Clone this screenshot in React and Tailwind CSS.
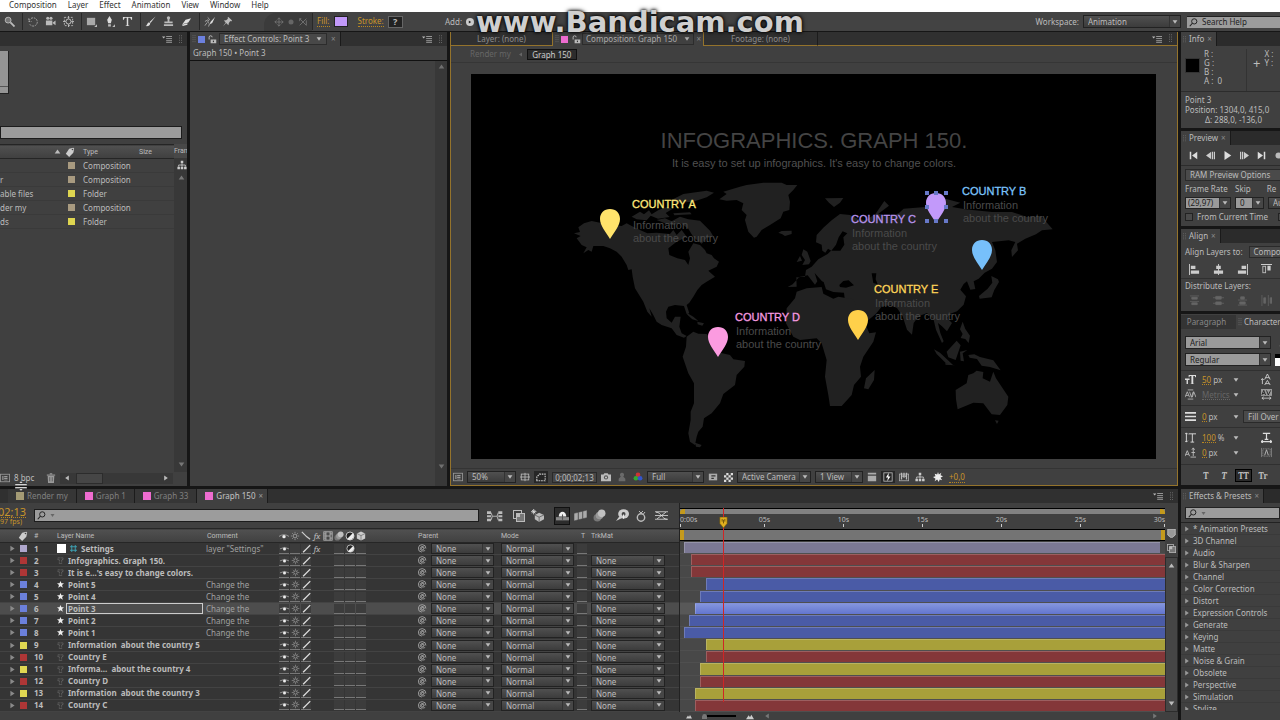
import React, { useState } from "react";

const icons = {
  zoom: <><circle cx="4.5" cy="4.5" r="3.2" fill="#777" stroke="#bbb" /><path d="M7 7l4.500 4.500" stroke="#bbb" strokeWidth="2" /></>,
  rotate: <path d="M2 2.500V6h3M2.500 5A4.500 4.500 0 1 1 3 9" fill="none" stroke="#aaa" strokeDasharray="2 1" />,
  camera: <><circle cx="3" cy="2.500" r="1.700" /><circle cx="6.500" cy="2.500" r="1.700" /><path d="M1 5h7v5H1zM8.500 7l3-2v5l-3-2z" /></>,
  anchor: <><rect x="1.500" y="1.500" width="9" height="9" fill="none" stroke="#bbb" strokeDasharray="2 1.500" /><circle cx="6" cy="6" r="2.800" fill="none" stroke="#ccc" /><path d="M0 6h3M9 6h3M6 0v3M6 9v3" stroke="#bbb" /></>,
  rect: <><rect x="1" y="2" width="9" height="8" fill="#aaa" /><path d="M12 9v3H9z" /></>,
  pen: <><path d="M6 0l2.500 4L7.500 8h-3l-1-4z" fill="#ddd" /><rect x="4.500" y="9" width="3" height="2.500" /><path d="M12 9v3H9z" /></>,
  type: <><path d="M1 1h10v3h-1L9 2H6.800v8l1.700 1h-5l1.700-1V2H3L2 4H1z" fill="#ddd" /></>,
  brush: <path d="M11.500.500L5 6.500l1 1zM4.500 7C2 7 3 10 .500 11c3 .500 5-.500 5.300-3z" fill="#ddd" />,
  stamp: <><circle cx="6" cy="2" r="1.800" /><path d="M5 3h2v3h3.500v2h-9V6H5zM1 9h10v2H1z" /></>,
  eraser: <path d="M5 4l6-1.500-3 4.500-6.500 2zM1 9.500l6-1.500v1.500L2 11z" fill="#e0e0e0" />,
  roto: <><path d="M4 1.500l2 2-2 3 2 2-1 3M4.500 4L1 6M3.500 7L1 10.500" stroke="#aaa" fill="none" /><path d="M12 1L7 6.500 6.500 9 9 7.500z" fill="#ddd" /></>,
  pin: <path d="M7 1l4 4-1 1-1-.500L7.500 7.500 7 10 4.500 7.500 1 11.500 4 7 2 5l2.500-.500L6.500 3 6 2z" fill="#bbb" />,
  axis: <path d="M6 1v10M1 6h10M4 3l2-2 2 2M4 9l2 2 2-2M3 4L1 6l2 2M9 4l2 2-2 2" stroke="#777" fill="none" />,
  dot: <circle cx="6" cy="6" r="3" fill="#666" />,
  axis2: <path d="M2 2l8 8M10 2L2 10M2 5V2h2M10 4v6" stroke="#777" fill="none" />,
  tag: <><path d="M5 2l5-1 1 1-1 5-5 5-4-4z" fill="#ccc" /><circle cx="9" cy="3" r="1" fill="#444" /></>,
  lock: <><path d="M1.500 6V3a2 2 0 0 1 4 0" fill="none" stroke="#bbb" strokeWidth="1.300" /><rect x="3.500" y="6" width="7.500" height="5" /><rect x="6.500" y="7.500" width="1.500" height="2" fill="#333" /></>,
  menu: <><path d="M0 3h4L2 5.500z" /><path d="M5 3h7M5 5.500h7M5 8h7M5 10h7" stroke="#aaa" /></>,
  tree: <><path d="M4.500 1h3v3h-3zM.500 8h3v3h-3zM4.500 8h3v3h-3zM8.500 8h3v3h-3z" fill="#ccc" /><path d="M6 4v4M2 8V6h8v2" stroke="#ccc" fill="none" /></>,
  trash: <><path d="M2 3.500h8L9.500 12h-7z" fill="#999" /><path d="M1 2.500h10M4.500 1h3" stroke="#bbb" /><path d="M4.500 5v5M7.500 5v5" stroke="#555" /></>,
  eye: <><path d="M0 6.500Q6 2.500 12 6.500" stroke="#aaa" fill="none" /><circle cx="6" cy="6.800" r="2" fill="#eee" /></>,
  sun: <><circle cx="6" cy="6" r="2.300" fill="none" stroke="#aaa" /><path d="M6 1v1.500M6 9.500V11M1 6h1.500M9.500 6H11M2.500 2.500l1 1M8.500 8.500l1 1M9.500 2.500l-1 1M2.500 9.500l1-1" stroke="#999" /></>,
  slash: <path d="M1.500 11L11 1.500" stroke="#e0e0e0" strokeWidth="1.700" />,
  backslash: <path d="M1 1l6 6 4 3" stroke="#ccc" strokeWidth="1.500" fill="none" />,
  film: <><rect x="1" y="1" width="10" height="10" fill="none" stroke="#bbb" /><path d="M3.500 1v10M8.500 1v10M3.500 6h5M1 3.500h2.500M1 6h2.500M1 8.500h2.500M8.500 3.500H11M8.500 8.500H11" stroke="#bbb" /></>,
  blur: <><circle cx="4" cy="8" r="3.500" fill="#777" /><circle cx="6" cy="6" r="3.500" fill="#999" /><circle cx="8" cy="4" r="3.500" fill="#c0c0c0" /></>,
  half: <><circle cx="6" cy="6" r="4.800" fill="#222" stroke="#ddd" /><path d="M9.500 2.500a5 5 0 0 1-7 7z" fill="#eee" /></>,
  cube: <><path d="M6 .500l5 2.500v6l-5 2.500L1 9V3z" fill="#ccc" /><path d="M1 3l5 2.500L11 3M6 5.500v6" stroke="#555" fill="none" strokeWidth=".700" /></>,
  spiral: <path d="M7.500 6a1.500 1.500 0 1 0-1.500 1.600C8 8 8.500 6 8 4.500 7 2.500 3.500 3 3 6c0 3.500 4 4 6.500 2.500M10.500 6A5 5 0 1 0 5 10.800" stroke="#bbb" fill="none" />,
  star: <path d="M6 0l1.700 4H12L8.600 6.800 10 11.500 6 8.800 2 11.500l1.400-4.700L0 4h4.300z" fill="#eee" />,
  text: <path d="M1.500 1.500h9v3H8v7H4v-7H1.500z" fill="none" stroke="#8c8c8c" strokeDasharray="1.500 1" />,
  grid: <path d="M3 0v12M9 0v12M0 3h12M0 9h12" stroke="#3fa9bd" strokeWidth="1.500" />,
  monitor: <><rect x=".500" y="1.500" width="11" height="9" fill="none" stroke="#999" /><path d="M3 3.500h1v5H3zM5 4h4v1H5zM5 6h4v1H5zM5 8h4v.800H5z" /></>,
  safe: <><rect x="1.500" y="2.500" width="9" height="7" fill="none" stroke="#bbb" /><path d="M6 1v10M0 6h12" stroke="#bbb" /></>,
  mask: <path d="M1 10.500V6l3-3.500h7v8z" fill="none" stroke="#ccc" strokeDasharray="2 1" strokeWidth="1.300" />,
  photo: <><path d="M0 3h3l1-1.500h4L9 3h3v8H0z" fill="#bbb" /><circle cx="6" cy="6.500" r="2.500" fill="#555" /><circle cx="6" cy="6.500" r="1.200" fill="#ccc" /></>,
  person: <path d="M6 1a2.500 2.500 0 0 1 1.500 4.500L10 8v3H2V8l2.500-2.500A2.500 2.500 0 0 1 6 1z" fill="#6a6a6a" />,
  rgb: <><circle cx="6" cy="3.500" r="2.800" fill="#c33" /><circle cx="3.500" cy="7.500" r="2.800" fill="#3a3" /><circle cx="8.500" cy="7.500" r="2.800" fill="#35c" /></>,
  region: <><rect x="1" y="2" width="10" height="8" fill="#aaa" /><path d="M4 4h5v1.500H4zM4 7h3v1.500H4z" fill="#333" /></>,
  checker: <><rect width="12" height="12" fill="#ddd" /><path d="M0 1.500h12M0 7.500h12" stroke="#444" strokeWidth="3" strokeDasharray="3 3" /><path d="M3 4.500h12M3 10.500h12" stroke="#444" strokeWidth="3" strokeDasharray="3 3" /></>,
  ratio: <><path d="M1 1h10v2H1zM1 4.500h10V11H1z" fill="#aaa" /></>,
  fast: <><rect x="1" y="1" width="10" height="10" fill="none" stroke="#bbb" /><path d="M7 1L3.500 6.500H6L5 11l4-5.500H6.500z" fill="#fff" /></>,
  timeline: <><rect x=".500" y="2.500" width="11" height="8" fill="none" stroke="#aaa" /><path d="M3 1v8M6 1v6M9 1v8M4 5h1.500M7 5h1.500" stroke="#bbb" strokeWidth="1.500" /></>,
  shutter: <path d="M6 0l1 3 3-2-1 3 3 1-3 2 2 3-3-1-1 3-2-3-3 2 1-3-3-2 3-1-1-3 3 1z" fill="#eee" />,
  flow: <><path d="M0 2.500h3v2H0zM0 5.500h3v1.500H0zM0 8h3v2H0zM8.500 2.500h3v2h-3zM8.500 5.500h3v1.500h-3zM8.500 8h3v2h-3z" fill="#bbb" /><path d="M3 3.500l1 2.700-1 2.800M8.500 3.500l-1 2.700 1 2.800M4 6.200h3.500" stroke="#aaa" fill="none" strokeWidth=".800" /></>,
  frames: <><rect x=".500" y=".500" width="8" height="8" fill="none" stroke="#bbb" /><rect x="3.500" y="3.500" width="8" height="8" fill="#777" stroke="#bbb" /><rect x="3" y="3" width="4" height="4" fill="#bbb" /></>,
  draft: <><path d="M2.500 0v5M0 2.500h5M1 1l3 3M4 1L1 4" stroke="#ddd" strokeWidth=".800" /><path d="M7.500 3.500L12 5.500v4L7.500 12 3.500 9.500v-4z" fill="#bbb" /><path d="M3.500 5.500l4 2 4.500-2M7.500 7.500V12" stroke="#555" fill="none" strokeWidth=".700" /></>,
  shy: <><path d="M0 7.500h12v3H0z" fill="#888" /><path d="M2.500 7a3.500 4.500 0 0 1 7 0z" fill="#eee" /><path d="M6 5v5" stroke="#555" /></>,
  blend: <><path d="M0 4l4-1v7l-4 1zM4 3l4-1v7l-4 1zM8 2l4-1v7L8 9z" fill="#aaa" stroke="#444" strokeWidth=".500" /></>,
  brain: <><ellipse cx="7" cy="4.500" rx="5" ry="4.300" fill="#ccc" /><path d="M3 7l-3 4 6-3z" fill="#ccc" /><circle cx="7" cy="4.500" r="1.800" fill="#444" /><path d="M7 5v4" stroke="#eee" /></>,
  timer: <><circle cx="6" cy="7.500" r="3.700" fill="none" stroke="#bbb" strokeWidth="1.400" /><path d="M4 1l2 2 2-2M10 2L8 4.500" stroke="#bbb" fill="none" /></>,
  graph: <><path d="M0 2.500h12M0 6h12M0 9.500h12" stroke="#bbb" /><path d="M1 3c5 0 5 6 10 6.500M2 9l8-6" stroke="#ddd" fill="none" strokeWidth=".800" /></>,
  solo: <><circle cx="6" cy="6" r="4" /></>,
  toStart: <path d="M1 1h2v10H1zM11 1v10L4 6z" fill="#ddd" />,
  stepBack: <path d="M7 1v10L0 6zM8 1h1.500v10H8zM10.500 1H12v10h-1.500z" fill="#ccc" />,
  play: <path d="M2 0v12l9-6z" fill="#ddd" />,
  stepFwd: <path d="M5 1v10l7-5zM2.500 1H4v10H2.500zM0 1h1.500v10H0z" fill="#ccc" />,
  toEnd: <path d="M9 1h2v10H9zM1 1v10l7-5z" fill="#ddd" />,
  alignL: <path d="M0 0h1v12H0zM2 2h5v3.500H2zM2 7h9v3.500H2z" fill="#ccc" />,
  alignC: <path d="M5.500 0h1v12h-1zM3.500 2h5v3.500h-5zM1 7h10v3.500H1z" fill="#ccc" />,
  alignR: <path d="M11 0h1v12h-1zM5 2h5v3.500H5zM1 7h9v3.500H1z" fill="#ccc" />,
  alignT: <><path d="M0 0h12v1H0zM7 2h3.500v5H7z" fill="#ccc" /><rect x="2" y="2.500" width="3" height="7" fill="none" stroke="#bbb" /></>,
  distT: <path d="M1 1h10M1 7h10M3 2.500h6v2H3zM3 8.500h6v2H3z" stroke="#666" strokeWidth=".800" fill="#666" />,
  distM: <path d="M0 3h12M0 9h12M3 1.500h6v3H3zM3 7.500h6v3H3z" stroke="#666" strokeWidth=".800" fill="#666" />,
  distB: <path d="M1 5.500h10M1 11h10M4 2h4v2.500H4zM3 7.500h6V10H3z" stroke="#666" strokeWidth=".800" fill="#666" />,
  distV: <path d="M1 0v12M8 0v12M3 3h2v6H3zM10 3h2v6h-2z" stroke="#666" fill="#666" strokeWidth=".800" />,
  size: <path d="M0 5h5v1.500H3.200V11H1.700V6.500H0zM4 1h8v2.500h-.800L10.800 2.200H9V10.500h1V11H6v-.500h1V2.200H5.200L4.800 3.500H4z" fill="#ddd" />,
  kern: <path d="M0 9l2.500-6L5 9M1 7h3M5 3l2 6 2-6M8 9l1.500-6L12 9M3 1h6M3 11h6" stroke="#bbb" fill="none" strokeWidth=".900" />,
  tracking: <><rect width="12" height="7.500" fill="#999" /><path d="M1 6.500L3 1.500l2 5M2 5h2M6 1.500l2 5 2.500-5" stroke="#222" fill="none" /><path d="M1 10h10M3 8.500L1 10l2 1.500M9 8.500l2 1.500-2 1.500" stroke="#ccc" fill="none" strokeWidth=".900" /></>,
  leading: <path d="M4 6l3-6 3 6M5 4h4M4 12l3-5 3 5M5 10.500h4M1.500 5v6M0 6.500L1.500 5 3 6.500" stroke="#ccc" fill="none" />,
  lines: <path d="M0 2h12M0 6h12M0 10h12" stroke="#ddd" strokeWidth="1.800" />,
  vscale: <path d="M1.500 1v10M0 2.500L1.500 1 3 2.500M0 9.500L1.500 11 3 9.500M4 2h8M8 2v9M6 11h4" stroke="#ddd" fill="none" />,
  hscale: <path d="M2 1.500h8M6 1v7M4 8h4M0 10.500h12M2 9l-2 1.500L2 12M10 9l2 1.500-2 1.500" stroke="#ddd" fill="none" strokeWidth="1.300" />,
  baseline: <path d="M0 10l2.500-6L5 10M1 8h3M6 11h6M9 1v9M7.500 3L9 1l1.500 2M7 6h4" stroke="#bbb" fill="none" />,
  tsume: <><rect x="2" y="2" width="8" height="8" fill="none" stroke="#999" strokeDasharray="1 1" /><path d="M4 9l2-6 2 6M0 1v10M12 1v10" stroke="#bbb" fill="none" /></>,
  search: <><circle cx="7" cy="4.500" r="3.500" fill="none" stroke="#222" strokeWidth="1.300" /><path d="M4.500 7L1 11" stroke="#222" strokeWidth="1.500" /></>,
  shield: <path d="M1 0h10v8l-5 4-5-4z" fill="#999" stroke="#ccc" />,
  grip: <path d="M4 1h1M7 1h1M4 4h1M7 4h1M4 7h1M7 7h1M4 10h1M7 10h1" stroke="#777" strokeWidth="1.500" />,
  mountain: <path d="M0 11l4-6 2 3 2-4 4 7z" fill="#ccc" />,
};

const Icon = ({ name, className = "size-[10px]" }) => (
  <svg viewBox="0 0 12 12" fill="#bbb" className={`shrink-0 ${className}`} aria-hidden="true">
    {icons[name]}
  </svg>
);

const Arrow = ({ dir = "down", className = "size-[6px]" }) => {
  const paths = { down: "M1 2h8L5 8z", up: "M1 8h8L5 2z", right: "M2 1v8l6-4z", left: "M8 1v8L2 5z" };
  return (
    <svg viewBox="0 0 10 10" fill="currentColor" className={`shrink-0 ${className}`} aria-hidden="true">
      <path d={paths[dir]} />
    </svg>
  );
};

const Select = ({ value, label, className = "", light = false }) => (
  <div className={`relative shrink-0 border border-[#222] bg-linear-to-b from-[#505050] to-[#3c3c3c] ${className}`}>
    <select
      aria-label={label}
      className={`block h-full w-full appearance-none truncate pr-3 pl-1 outline-none ${light ? "bg-[#9a9a9a] text-[#1c1c1c]" : ""}`}
    >
      <option>{value}</option>
    </select>
    <span className="pointer-events-none absolute inset-y-0 right-0 flex w-[11px] items-center justify-center border-l border-[#333] bg-[#464646]">
      <Arrow />
    </span>
  </div>
);

const PanelMenu = () => (
  <div className="ml-auto flex items-center gap-1 pr-0.5">
    <Icon name="menu" />
    <Icon name="grip" className="size-[9px]" />
  </div>
);

const PanelTab = ({ title }) => (
  <div className="flex h-[14px] bg-[#2b2b2b]">
    <div className="flex items-center gap-px border-r border-[#1a1a1a] bg-[#404040] pr-1">
      <Icon name="grip" className="size-[7px]" />
      <h2>{title}</h2>
      <button aria-label="Close" className="pl-0.5 text-[#888]">×</button>
    </div>
  </div>
);

const Sep = () => <span className="h-[17px] w-px bg-[#282828]" />;

const ToolGroup = ({ names }) => (
  <div className="flex">
    {names.map((name) => (
      <button key={name} aria-label={name} className="flex w-[18px] justify-center">
        <Icon name={name} className="size-[11px]" />
      </button>
    ))}
  </div>
);

const Toolbar = () => (
  <div className="flex h-[19px] shrink-0 items-center bg-[#434343]">
    <ToolGroup names={["zoom"]} />
    <div className="ml-1 flex items-center"><Sep /><ToolGroup names={["rotate", "camera", "anchor"]} /></div>
    <div className="ml-1 flex items-center"><Sep /><ToolGroup names={["rect", "pen", "type"]} /></div>
    <div className="ml-1 flex items-center"><Sep /><ToolGroup names={["brush", "stamp", "eraser"]} /></div>
    <div className="ml-1 flex items-center"><Sep /><ToolGroup names={["roto", "pin"]} /></div>
    <div className="ml-7 flex items-center gap-0.5 rounded-tl-xl bg-[#3b3b3b] py-1 pr-1 pl-[10px]">
      <Icon name="axis" />
      <Icon name="dot" />
      <Icon name="axis2" />
    </div>
    <Sep />
    <div className="flex w-[132px] items-center pl-1">
      <span className="border-b border-dotted border-[#b8861f] leading-[10px] text-[#c8952a]">Fill:</span>
      <button aria-label="Fill colour" className="ml-1 h-[11px] w-[14px] border border-[#222] bg-[#c299fa]" />
      <span className="ml-2.5 border-b border-dotted border-[#b8861f] leading-[10px] text-[#c8952a]">Stroke:</span>
      <button className="ml-1 h-3 w-[15px] border border-[#666] bg-[#222] text-[9px] leading-[10px] font-bold">?</button>
    </div>
    <span>Add:</span>
    <button aria-label="Add" className="ml-1 flex size-2 items-center justify-center rounded-full bg-[#ccc] text-[#222]">
      <Arrow dir="right" className="size-1" />
    </button>
    <div className="ml-auto flex items-center">
      <span>Workspace:</span>
      <Select label="Workspace" value="Animation" className="ml-1 h-[13px] w-[98px]" />
      <label className="ml-1.5 flex h-3 w-[93px] items-center gap-1 border-t border-[#222] bg-[#9c9c9c] pl-0.5 text-[#222]">
        <Icon name="search" className="size-[9px]" />
        <input aria-label="Search Help" defaultValue="Search Help" className="w-full min-w-0 outline-none" />
      </label>
    </div>
  </div>
);

const files = [
  { name: "", color: "#a89a80", type: "Composition" },
  { name: "r", color: "#a89a80", type: "Composition" },
  { name: "able files", color: "#ded550", type: "Folder" },
  { name: "der my", color: "#a89a80", type: "Composition" },
  { name: "ds", color: "#ded550", type: "Folder" },
];

const ProjectPanel = () => (
  <section className="flex w-[187px] shrink-0 flex-col overflow-hidden bg-[#404040]">
    <div className="flex h-[14px] shrink-0 bg-[#303030]"><PanelMenu /></div>
    <div className="mt-[5px] h-[43px] w-[9px] shrink-0 border-r border-b border-[#222] bg-[#959595]">
      <div className="mt-[35px] h-px bg-[#555]" />
    </div>
    <input aria-label="Search project" className="mt-8 h-[13px] w-[182px] shrink-0 border border-[#1c1c1c] bg-[#9c9c9c]" />
    <div className="mt-[5px] flex min-h-0 flex-1">
      <table className="w-[174px] shrink-0 table-fixed self-start">
        <colgroup><col className="w-[65px]" /><col className="w-[14px]" /><col className="w-[56px]" /><col className="w-[39px]" /></colgroup>
        <thead>
          <tr className="h-[14px] border-y border-[#252525] bg-linear-to-b from-[#505050] to-[#404040] text-left font-['Roboto'] text-[7px]">
            <th className="p-0"><Arrow dir="up" className="mr-1 ml-auto size-[7px]" /></th>
            <th className="p-0"><Icon name="tag" /></th>
            <th className="p-0 pl-1 font-normal">Type</th>
            <th className="p-0 pl-1 font-normal">Size</th>
          </tr>
        </thead>
        <tbody>
          {files.map((file, i) => (
            <tr key={i} className="h-[14px] border-b border-[#3a3a3a]">
              <td className="truncate p-0">{file.name}</td>
              <td className="p-0"><span className="ml-[3px] block size-[7px]" style={{ background: file.color }} /></td>
              <td className="p-0 pl-1">{file.type}</td>
              <td className="p-0" />
            </tr>
          ))}
        </tbody>
      </table>
      <div className="flex flex-1 flex-col items-center bg-[#383838]">
        <span className="h-[14px] w-full overflow-hidden bg-[#484848] font-['Roboto'] text-[7px] leading-[14px]">Fram</span>
        <Icon name="tree" className="mt-0.5 size-[10px]" />
        <Arrow dir="up" className="mt-1 size-[7px] text-[#777]" />
        <Arrow dir="down" className="mt-auto mb-1 size-[7px] text-[#777]" />
      </div>
    </div>
    <div className="mb-0.5 flex h-3 shrink-0 items-center">
      <Icon name="monitor" />
      <span className="ml-1">8 bpc</span>
      <Icon name="trash" className="ml-3 size-[10px]" />
      <div className="ml-1 flex h-[11px] w-[113px] items-center bg-[#383838] px-1">
        <Arrow dir="left" />
        <span className="ml-1.5 h-[11px] w-[27px] border border-[#2c2c2c] bg-[#464646]" />
        <Arrow dir="right" className="ml-auto size-[6px]" />
      </div>
    </div>
  </section>
);

const EffectControls = () => (
  <section className="flex w-[257px] shrink-0 flex-col bg-[#404040]">
    <div className="flex h-[14px] shrink-0 bg-[#303030]">
      <div className="flex items-center border-r border-[#1a1a1a] bg-[#404040]">
        <Icon name="grip" className="size-2" />
        <span className="size-[7px] bg-[#6c80de]" />
        <Icon name="lock" className="ml-[3px] size-[9px]" />
        <button className="ml-0.5 flex h-3 w-[108px] items-center border border-[#2c2c2c] bg-[#484848] px-1 whitespace-nowrap">
          Effect Controls: Point 3
          <Arrow className="ml-auto size-[6px]" />
        </button>
        <button aria-label="Close" className="px-1 text-[#888]">×</button>
      </div>
      <PanelMenu />
    </div>
    <p className="h-[15px] border-b border-[#111] pl-[3px] leading-[14px]">Graph 150 • Point 3</p>
    <div className="ml-auto flex w-3 flex-1 flex-col items-center justify-between bg-[#383838] pt-0.5 pb-4 text-[#707070]">
      <Arrow dir="up" className="size-[7px]" />
      <Arrow className="size-[7px]" />
    </div>
  </section>
);

const Pin = ({ x, y, color }) => (
  <path d="M0-17C6-17 10-13 10-7 10 0 4 6 0 13-4 6-10 0-10-7-10-13-6-17 0-17z" fill={color} transform={`translate(${x} ${y})`} />
);

const countries = [
  { name: "COUNTRY A", x: 161, y: 134, color: "#ffe87a", gap: 21 },
  { name: "COUNTRY B", x: 491, y: 121, color: "#7cc4fb", gap: 14 },
  { name: "COUNTRY C", x: 380, y: 149, color: "#b794ec", gap: 14 },
  { name: "COUNTRY D", x: 264, y: 247, color: "#f79be0", gap: 14 },
  { name: "COUNTRY E", x: 403, y: 219, color: "#ffd558", gap: 14 },
];

const WorldMap = () => (
  <svg viewBox="0 0 685 385" className="block h-auto w-full bg-black font-['Liberation_Sans']" role="img" aria-label="World map infographic">
    <g fill="#212121" transform="translate(89 96) scale(.3333)">
      <path d="M42 190l18-4-5-14 17-12 23-7 25 5 30 7 35 3 15-8 15 8 25 12 22 10 28-2 40 4 10-12 10 15 15-15 15 20-30 15-25 20 3 20 24 10 23 5 10 15 5-20-5-20 15-25 20 5 15 15 5 10 15 5 7 10 15 10-7 15-25 12 20 18-25 15-15 10-13 15-12 20-12 18-8 7 8 25-8 2-8-24-27-3-20 5-7 15 2 20 15 13 10-18h17l-4 30 7 20 15 8-8 5-22-8-15-20-30-10-15-10-10-20-12-20 7 25-13-15-12-30-25-40-7-35-3-22-10 2-5-15-15-25-15-15-20-10-20-7h-30l-5 17-10-5-15 10 10-18-15-7-15-20 12-7z" />
      <path d="M380 500l20-15 15 6 25 1 30 38 10 18 30 7 10 13 35 5-2 17-23 25-5 30-35 27-10 28-25 30-23 15-4 25-13 15-5 15-5 25-15-10-5-25 7-40v-25l10-25v-60l-17-30-17-50 10-30zM405 818l20 7-5 7-12-2zM380 428l20 12 15 13-18-5-15-14zM412 455l20 5-5 7-14-4z" />
      <path d="M330 92l40-20 70-10 22 6-22 14-40 13-50 3zM215 140l25-15 12 8 15-12 8 12 22-14 25-8 15 6-20 12 12 12-35 5-22-9-12 14-30-3zM340 130l50-3 5 6-52 3zM290 150l25-5 20 9 25-14 25 8 35 4 30 30 10 17-20 5-15 17-25-20-15-25-25-18-20 8-25-6z" />
      <path d="M478 88l22-16-10-7 50-15 20-5 50-7h55l15 7h32l-12 15-15 15 5 20-2 25-18 5-8 20-32 20-25 15-15 20-8 3-17-18-10-35 5-15-15-15 5-20-20-10-30 2zM655 188l10-5 30-1v10l-20 6-8-5z" />
    </g>
    <g fill="#212121" transform="translate(309 96) scale(.3333)">
      <path d="M50 350l-1-28 26-2 3-20 17-10 20-22 28-16 10-10h28l12-18-3-22 12-12-14-6-12 18-8 22-14 18-10-6-8 12-9-6-2-18-17-7 2-22 20-22 25-22 25-19 30 3 25 12 22 4 30-20 26-38 14 14-32 24 33 9 28-10 15-14 65-5 30-10 30-15 45 12-25 13 40 7 80 8h60l45 15h45l32 37-32 3-18 12-32 13-25 15 3 20-18 20-2-20 12-25-20-5-50 5 10 25 5 35-15 20-22 12-18 18-15 8 5 23-15 2-10-25-10 8-10 17 17 20-7 25-20 20-20 7-10 13 15 15-15 25-15-15-12-10 7 30 10 25-5 5-18-40-7-30-20-20-25 10-15 20-5 35-15-15-13-40-17-25-20-8-25 3-18 22-38 32-18 6-17-38-20-38-3-25-32-2-22-8-7-22-5-2-22-25 8 25-7 10-22-28-25 5-20 22-15 8z" />
      <path d="M50 365l30-10 45-4 5 20 30 15 15-6 45 8 15 32 20 40 13 30 20-3-8 28-30 45-10 30 3 30-21 25-7 30-30 33h-35l-5-33-10-55 5-50-15-50-15-15-50 5-20-10-22-40 2-45 25-30zM284 600l-2 30-17 28-13-3 6-30zM135 85l55-1-10 14-18 13-15-13zM70 238l12 7 10 28-5 10-20 2 8-15-10-15zM60 258l6 14-16 4z" />
      <path d="M462 538l18 10 40 38-22-6-28-28zM500 545l30-33 12 14-15 44-22-8zM495 580l30 6-28-2zM540 545l22-5-14 10 4 24-10-2zM548 455l8 22 14 20-4 22-10-12-14-3 6-12-8-14zM565 555l18-2 17 8 40 10 22 30-32-10-25-4-14-20-22-4zM634 318l20 10 3 8-14 24-8 22-36 4-2-8 26-22 14-18z" />
      <path d="M527 660l33-20 5-25 15-5 10-8 20 4-2 19 22 10 10-30 8 20 37 55-3 25-22 30-25-2-25-33-30-2-47 20-5-30zM645 751l11 1-5 10z" />
      <path d="M275 310h14l-2 18 6 15-13-4zM178 345l12-12 16-2 16 15-24 7-18-2z" fill="#000" />
    </g>
    <text x="343" y="74" textAnchor="middle" fontSize="22" fill="#444">INFOGRAPHICS. GRAPH 150.</text>
    <text x="343" y="93" textAnchor="middle" fontSize="11" fill="#505050">It is easy to set up infographics. It's easy to change colors.</text>
    {countries.map((c) => (
      <g key={c.name}>
        <text x={c.x} y={c.y} fontSize="11" stroke={c.color} strokeWidth=".3" fill={c.color}>{c.name}</text>
        <text x={c.x + 1} y={c.y + c.gap} fontSize="11" fill="#4a4a4a">Information</text>
        <text x={c.x + 1} y={c.y + c.gap + 13} fontSize="11" fill="#4a4a4a">about the country</text>
      </g>
    ))}
    <Pin x={139} y={152} color="#ffe36b" />
    <Pin x={465} y={136} color="#c299fa" />
    <Pin x={511} y={183} color="#77c0fb" />
    <Pin x={247} y={270} color="#fb9be0" />
    <Pin x={387} y={253} color="#ffd04a" />
    {[119, 133, 147].map((y) => [456, 465, 475].map((x) => (x === 465 && y === 133 ? null : <rect key={`${x}-${y}`} x={x - 2} y={y - 2} width="4" height="4" fill="#6778c8" />)))}
  </svg>
);

const CompositionPanel = () => (
  <section className="flex min-w-0 flex-1 flex-col border border-t-0 border-[#94732c] bg-[#404040]">
    <div className="flex h-[14px] shrink-0 bg-[#303030] whitespace-nowrap text-[#8c8c8c]">
      <button className="w-[101px] border-b border-[#94732c]">Layer: (none)</button>
      <div className="flex w-[152px] items-center border-x border-[#94732c] bg-[#404040] text-[#aaa]">
        <Icon name="grip" className="size-2" />
        <span className="size-[7px] bg-[#ee6cd0]" />
        <Icon name="lock" className="ml-1 size-[9px]" />
        <button className="ml-px flex h-3 flex-1 items-center border border-[#2c2c2c] px-[3px]">
          Composition: Graph 150
          <Arrow className="ml-auto size-[6px]" />
        </button>
        <button aria-label="Close" className="px-0.5 text-[#888]">×</button>
      </div>
      <button className="w-[114px] border-r border-b border-b-[#94732c] border-r-[#1c1c1c]">Footage: (none)</button>
      <div className="flex flex-1 border-b border-[#94732c]"><PanelMenu /></div>
    </div>
    <nav className="flex h-[17px] shrink-0 items-center border-b border-[#363636] pl-[19px] text-[#666]">
      <button>Render my</button>
      <Arrow dir="left" className="ml-[7px] size-[5px]" />
      <button className="ml-1 h-[11px] w-[50px] border border-[#111] bg-[#2c2c2c] leading-[9px] text-[#ccc]">Graph 150</button>
    </nav>
    <div className="flex-1 pt-[11px] pr-[21px] pl-5"><WorldMap /></div>
    <div className="flex h-[17px] shrink-0 items-center gap-1 border-t border-[#343434] pl-0.5">
      <Icon name="monitor" />
      <Select label="Zoom" value="50%" className="h-3 w-[49px]" />
      <Icon name="safe" />
      <span className="flex h-3 w-[14px] items-center justify-center bg-[#262626]"><Icon name="mask" /></span>
      <button className="h-[11px] w-[45px] border border-[#2a2a2a] bg-[#464646] leading-[9px]">0;00;02;13</button>
      <Icon name="photo" />
      <Icon name="person" className="ml-0.5 size-[10px]" />
      <Icon name="rgb" className="ml-0.5 size-[10px]" />
      <Select label="Resolution" value="Full" className="h-3 w-[57px]" />
      <Icon name="region" />
      <Icon name="checker" className="ml-0.5 size-[9px]" />
      <Select label="Camera" value="Active Camera" className="h-3 w-[74px]" />
      <Select label="View layout" value="1 View" className="h-3 w-[48px]" />
      <Icon name="ratio" className="size-[10px]" />
      <span className="flex h-3 w-[14px] items-center justify-center bg-[#262626]"><Icon name="fast" /></span>
      <Icon name="timeline" />
      <Icon name="tree" className="ml-0.5 size-[10px]" />
      <Icon name="shutter" className="ml-1 size-[10px]" />
      <span className="ml-0.5 border-b border-dotted border-[#b8861f] leading-[10px] text-[#c8952a]">+0,0</span>
    </div>
  </section>
);

const swatches = { lavender: "#aea6cc", red: "#ae3636", blue: "#6b80dc", yellow: "#e0d752" };
const bars = { lavender: "#7b7894", red: "#843739", blue: "#4a5ba6", yellow: "#a8a03a" };

// start is the in point, in pixels of the 485px wide track
const layers = [
  { name: "Settings", color: "lavender", kind: "null", comment: 'layer "Settings"', start: 4, end: 480 },
  { name: "Infographics. Graph 150.", color: "red", kind: "text", start: 11 },
  { name: "It is e...'s easy to change colors.", color: "red", kind: "text", start: 11 },
  { name: "Point 5", color: "blue", kind: "shape", comment: "Change the", start: 26 },
  { name: "Point 4", color: "blue", kind: "shape", comment: "Change the", start: 20 },
  { name: "Point 3", color: "blue", kind: "shape", comment: "Change the", start: 15, selected: true },
  { name: "Point 2", color: "blue", kind: "shape", comment: "Change the", start: 9 },
  { name: "Point 1", color: "blue", kind: "shape", comment: "Change the", start: 4 },
  { name: "Information  about the country 5", color: "yellow", kind: "text", start: 26 },
  { name: "Country E", color: "red", kind: "text", start: 26 },
  { name: "Informa...  about the country 4", color: "yellow", kind: "text", start: 20 },
  { name: "Country D", color: "red", kind: "text", start: 20 },
  { name: "Information  about the country 3", color: "yellow", kind: "text", start: 15 },
  { name: "Country C", color: "red", kind: "text", start: 15 },
];

const Slot = ({ icon }) => (
  <span className="flex h-[10px] w-[10px] items-center justify-center border-b border-[#777] bg-[#3c3c3c]">
    {icon && <Icon name={icon} className="size-[9px]" />}
  </span>
);

const LayerRow = ({ layer, index }) => (
  <tr className={`h-3 border-b border-[#434343] ${layer.selected ? "bg-[#4d4d4d]" : "bg-[#353535]"}`}>
    <td className="p-0"><Arrow dir="right" className="ml-auto size-[7px] text-[#8a8a8a]" /></td>
    <td className="p-0"><span className="ml-1 block size-[7px]" style={{ background: swatches[layer.color] }} /></td>
    <td className="p-0 pl-1 font-bold">{index + 1}</td>
    <td className="p-0">
      <div className="flex items-center gap-1 pl-1">
        {layer.kind === "null" && <span className="size-[9px] bg-white" />}
        {layer.kind === "null" && <Icon name="grid" className="size-[7px]" />}
        {layer.kind === "text" && <Icon name="text" className="size-[7px]" />}
        {layer.kind === "shape" && <Icon name="star" className="size-[7px]" />}
        <span className={`flex-1 truncate font-bold whitespace-pre ${layer.selected ? "-ml-0.5 border border-[#ccc] pl-px leading-[9px]" : ""}`}>{layer.name}</span>
      </div>
    </td>
    <td className="p-0 pl-[3px] whitespace-nowrap text-[#a0a0a0]">{layer.comment}</td>
    <td className="p-0">
      <div className="flex gap-px pl-[3px]">
        <Slot icon="eye" />
        <Slot icon={index > 0 ? "sun" : null} />
        <Slot icon="slash" />
        <span className="w-[10px] text-center font-serif text-[9px] leading-[10px] italic">{index === 0 ? "fx" : ""}</span>
        <span className="w-[10px]" />
        <Slot />
        <Slot icon={index === 0 ? "half" : null} />
        <Slot />
      </div>
    </td>
    <td className="p-0">
      <div className="flex items-center gap-1">
        <Icon name="spiral" className="size-[9px]" />
        <Select label={`Parent of ${layer.name}`} value="None" className="h-[11px] w-[63px]" />
      </div>
    </td>
    <td className="p-0"><Select label={`Mode of ${layer.name}`} value="Normal" className="h-[11px] w-[73px]" /></td>
    <td className="p-0"><Slot /></td>
    <td className="p-0">{index > 0 && <Select label={`Track matte of ${layer.name}`} value="None" className="h-[11px] w-[74px]" />}</td>
    <td className="p-0" />
  </tr>
);

const LayerTable = () => (
  <table className="h-[184px] w-full table-fixed">
    <colgroup>
      <col className="w-[16px]" /><col className="w-[14px]" /><col className="w-[23px]" /><col className="w-[150px]" />
      <col className="w-[73px]" /><col className="w-[142px]" /><col className="w-[83px]" /><col className="w-[76px]" />
      <col className="w-[14px]" /><col className="w-[78px]" /><col />
    </colgroup>
    <thead>
      <tr className="h-[14px] border-y border-[#262626] bg-linear-to-b from-[#505050] to-[#414141] text-left font-['Roboto'] text-[7px] *:p-0 *:font-normal">
        <th />
        <th><Icon name="tag" className="ml-0.5 size-[10px]" /></th>
        <th><span className="pl-1">#</span></th>
        <th><span className="pl-1">Layer Name</span></th>
        <th><span className="pl-1">Comment</span></th>
        <th>
          <div className="flex items-center gap-px pl-[3px]">
            <Icon name="eye" /><Icon name="sun" /><Icon name="backslash" />
            <span className="w-[10px] text-center font-serif text-[9px] leading-[10px] italic">fx</span>
            <Icon name="film" /><Icon name="blur" /><Icon name="half" /><Icon name="cube" />
          </div>
        </th>
        <th>Parent</th>
        <th>Mode</th>
        <th><span className="pl-1">T</span></th>
        <th>TrkMat</th>
        <th />
      </tr>
    </thead>
    <tbody>
      {layers.map((layer, i) => <LayerRow key={i} layer={layer} index={i} />)}
    </tbody>
  </table>
);

const Tracks = () => (
  <div className="relative flex w-[485px] shrink-0 flex-col">
    <div className="mt-[5px] flex h-[6px] shrink-0 justify-between border-t border-black bg-[#828282]">
      <span className="w-[5px] rounded-tl bg-[#c49a1c]" />
      <span className="w-[5px] rounded-tr bg-[#c49a1c]" />
    </div>
    <div className="flex h-[14px] shrink-0 justify-between pt-px text-[7px] leading-[9px]">
      {["0:00s", "05s", "10s", "15s", "20s", "25s", "30s"].map((t, i) => (
        <span key={t} className={`flex w-[11px] flex-col ${i === 0 ? "items-start" : i === 6 ? "items-end" : "items-center"}`}>
          <span>{t}</span>
          <span className="h-[3px] w-px bg-[#ccc]" />
        </span>
      ))}
    </div>
    <div className="mt-px flex h-3 shrink-0 justify-between border-y border-black bg-[#747474]">
      <span className="w-1 bg-[#c49a1c]" />
      <span className="w-1 bg-[#c49a1c]" />
    </div>
    <div className="mt-px flex h-[170px] flex-col bg-[#484848]">
      {layers.map((layer, i) => (
        <div key={i} className={`flex flex-1 border-b border-[#4f4f4f] ${layer.selected ? "bg-[#585858]" : ""}`}>
          <div
            className={`border-t border-l border-white/20 ${layer.selected ? "bg-linear-to-b from-[#8394dd] to-[#6375cf]" : ""}`}
            style={{
              marginLeft: layer.start,
              width: (layer.end || 485) - layer.start,
              backgroundColor: layer.selected ? undefined : bars[layer.color],
            }}
          />
        </div>
      ))}
    </div>
    <div className="absolute top-[5px] bottom-[10px] left-[43px] w-px bg-[#d02525]" />
    <svg viewBox="0 0 10 12" className="absolute top-[14px] left-[39px] h-[11px] w-[9px]" aria-hidden="true">
      <path d="M1 0h8v7l-4 5-4-5z" fill="#e0b020" stroke="#7a5c08" strokeWidth=".7" />
      <path d="M3.500 2v3M6.500 2v3M5 3v4" stroke="#6b5008" />
    </svg>
  </div>
);

const TimelinePanel = () => {
  const [tab, setTab] = useState("Graph 150");
  const tabs = [
    { name: "Render my", color: "#a39a74" },
    { name: "Graph 1", color: "#ee6cd0" },
    { name: "Graph 33", color: "#ee6cd0" },
    { name: "Graph 150", color: "#ee6cd0" },
  ];

  return (
    <section className="flex h-[231px] shrink-0 flex-col overflow-hidden bg-[#404040]">
      <div className="flex h-[14px] shrink-0 bg-[#303030] pl-2">
        {tabs.map((t) => (
          <button
            key={t.name}
            onClick={() => setTab(t.name)}
            className={`flex items-center gap-[3px] border-r border-[#1c1c1c] pr-2 pl-2 ${t.name === tab ? "bg-[#404040] text-[#c4c4c4]" : "bg-[#363636] text-[#808080]"}`}
          >
            <span className="size-[8px]" style={{ background: t.color }} />
            {t.name}
            {t.name === tab && <span className="-mr-1 text-[#999]">×</span>}
          </button>
        ))}
        <PanelMenu />
      </div>
      <div className="flex min-h-0 flex-1">
        <div className="flex min-w-0 flex-1 flex-col border-r border-[#222]">
          <div className="flex h-[25px] shrink-0 items-center">
            <div className="mr-2 flex w-[26px] flex-col items-end text-[#c8952a]">
              <span className="border-b border-dotted border-[#b8861f] text-[11px] leading-[11px]">02;13</span>
              <span className="pr-1 text-[7px] leading-2 whitespace-nowrap">97 fps)</span>
            </div>
            <label className="flex h-[13px] w-[445px] items-center gap-1 border border-[#1c1c1c] bg-[#9c9c9c] pl-0.5 text-[#666]">
              <Icon name="search" className="size-[9px]" />
              <Arrow className="size-[5px]" />
              <input aria-label="Search layers" className="min-w-0 flex-1 outline-none" />
            </label>
            <div className="flex flex-1 items-center pl-2">
              <Icon name="flow" className="size-4" />
              <Icon name="frames" className="ml-2.5 size-3" />
              <Icon name="draft" className="ml-1.5 size-[13px]" />
              <span className="ml-2.5 flex h-[18px] w-4 items-center justify-center border border-[#111] bg-[#2c2c2c]"><Icon name="shy" className="size-[13px]" /></span>
              <Icon name="blend" className="ml-1 size-[13px]" />
              <Icon name="blur" className="ml-1.5 size-[13px]" />
              <Icon name="brain" className="ml-2.5 size-[13px]" />
              <Icon name="timer" className="ml-1.5 size-3" />
              <Icon name="graph" className="ml-2 size-[13px]" />
            </div>
          </div>
          <LayerTable />
        </div>
        <Tracks />
        <div className="flex w-[13px] shrink-0 flex-col items-center bg-[#404040]">
          <Icon name="shield" className="mt-[26px] size-[9px]" />
          <Icon name="frames" className="mt-1.5 size-[9px]" />
          <div className="mt-1 flex w-full flex-1 flex-col items-center justify-between border border-[#2c2c2c] bg-[#464646] py-1">
            <Arrow dir="up" className="size-[7px]" />
            <Arrow className="size-[7px]" />
          </div>
        </div>
      </div>
      <div className="flex h-2 shrink-0 items-center">
        <div className="ml-auto flex w-[498px] items-center text-[#777]">
          <Icon name="mountain" className="ml-1.5 size-[6px]" />
          <input
            type="range"
            aria-label="Time zoom"
            defaultValue="0"
            className="ml-2.5 h-0.5 w-[34px] appearance-none bg-black [&::-webkit-slider-thumb]:size-[5px] [&::-webkit-slider-thumb]:appearance-none [&::-webkit-slider-thumb]:rounded-t-full [&::-webkit-slider-thumb]:bg-[#777]"
          />
          <Icon name="mountain" className="ml-2 h-2 w-3" />
          <Arrow dir="left" className="ml-2 size-[6px]" />
          <Arrow dir="right" className="mr-5 ml-auto size-[6px]" />
        </div>
      </div>
    </section>
  );
};

const Amount = ({ icon, value, unit, right }) => (
  <div className="flex h-[15px] items-center">
    <Icon name={icon} className="size-[11px]" />
    <span className="ml-1.5 border-b border-dotted border-[#b8861f] leading-[9px] text-[#c8952a]">{value}</span>
    <span className="ml-0.5">{unit}</span>
    <span className="absolute left-[52px]"><Arrow /></span>
    <span className="absolute left-[80px]">{right}</span>
  </div>
);

const categories = [
  "* Animation Presets", "3D Channel", "Audio", "Blur & Sharpen", "Channel", "Color Correction", "Distort",
  "Expression Controls", "Generate", "Keying", "Matte", "Noise & Grain", "Obsolete", "Perspective", "Simulation", "Stylize",
];

const Sidebar = () => (
  <aside className="flex w-[99px] shrink-0 flex-col gap-[3px] overflow-hidden whitespace-nowrap *:bg-[#404040]">
    <section className="h-[96px] shrink-0">
      <PanelTab title="Info" />
      <div className="flex h-[46px] border-b border-[#2c2c2c] pt-[3px] leading-[9px]">
        <span className="mt-[9px] ml-1 size-[15px] border border-[#333] bg-black" />
        <div className="ml-1"><p>R :</p><p>G :</p><p>B :</p><p>A :&nbsp; 0</p></div>
        <span className="ml-6 w-px bg-[#333]" />
        <span className="mt-1.5 ml-1.5 text-[13px] leading-4">+</span>
        <div className="ml-1"><p>X :</p><p>Y :</p></div>
      </div>
      <div className="pt-[3px] pl-1 leading-[10px]">
        <p>Point 3</p>
        <p>Position: 1304,0, 415,0</p>
        <p className="pl-5">Δ: 288,0, -136,0</p>
      </div>
    </section>

    <section className="h-[95px] shrink-0">
      <PanelTab title="Preview" />
      <div className="flex h-[21px] items-center gap-2 border-b border-[#2c2c2c] pl-2">
        {["toStart", "stepBack", "play", "stepFwd", "toEnd", "solo"].map((n) => (
          <button key={n} aria-label={n}><Icon name={n} className="size-[9px]" /></button>
        ))}
      </div>
      <button className="mt-[3px] ml-1 h-3 w-[110px] border border-[#2a2a2a] bg-[#4a4a4a] pl-1 text-left leading-[10px]">RAM Preview Options</button>
      <div className="mt-0.5 flex gap-2 pl-1 leading-3"><span className="w-[42px]">Frame Rate</span><span>Skip</span><span className="pl-2">Re</span></div>
      <div className="mt-0.5 flex gap-1 pl-1">
        <Select label="Frame rate" value="(29,97)" light className="h-3 w-[46px] *:first:pl-0.5" />
        <Select label="Skip" value="0" light className="h-3 w-[29px]" />
        <Select label="Resolution" value="Auto" className="h-3 w-[46px]" />
      </div>
      <label className="mt-0.5 flex items-center gap-1 pl-1 leading-3">
        <input type="checkbox" className="size-2 shrink-0 appearance-none border border-[#222] bg-[#4a4a4a]" />
        From Current Time
        <input type="checkbox" aria-label="Full screen" className="ml-1.5 size-2 shrink-0 appearance-none border border-[#222] bg-[#4a4a4a]" />
      </label>
    </section>

    <section className="h-[82px] shrink-0">
      <PanelTab title="Align" />
      <div className="flex h-[17px] items-center gap-1.5 pl-1">
        Align Layers to: <button className="h-3 w-[60px] border border-[#2a2a2a] bg-[#484848] pl-1 text-left leading-[10px]">Composition</button>
      </div>
      <div className="flex h-[19px] items-center gap-[13px] border-b border-[#303030] pl-2">
        {["alignL", "alignC", "alignR", "alignT"].map((n) => <button key={n} aria-label={n}><Icon name={n} className="size-[11px]" /></button>)}
      </div>
      <p className="pl-1 leading-[13px]">Distribute Layers:</p>
      <div className="flex h-4 items-center gap-[13px] pl-2">
        {["distT", "distM", "distB", "distV"].map((n) => <button key={n} aria-label={n}><Icon name={n} className="size-[11px]" /></button>)}
      </div>
    </section>

    <section className="h-[171px] shrink-0">
      <div className="mt-px flex h-[14px] items-center bg-[#2b2b2b]">
        <button className="h-full w-[55px] bg-[#343434] pr-1 text-[#888]">Paragraph</button>
        <h2 className="flex h-full w-[44px] items-center bg-[#404040]"><Icon name="grip" className="size-2" />Character</h2>
      </div>
      <div className="flex flex-col gap-1 pt-[7px] pl-1">
        <div className="flex items-center gap-2">
          <Select label="Font" value="Arial" light className="h-[13px] w-[86px]" />
          <Icon name="slash" className="size-2" />
        </div>
        <div className="flex items-center gap-1">
          <Select label="Font style" value="Regular" light className="h-[13px] w-[86px]" />
          <span className="h-3 w-5 border-t-4 border-black bg-white" />
        </div>
      </div>
      <div className="relative mt-1 border-t border-[#303030] pt-px pl-1">
        <Amount icon="size" value="50" unit="px" right={<Icon name="leading" className="size-[11px]" />} />
        <div className="flex h-[15px] items-center">
          <Icon name="kern" className="size-[11px]" />
          <span className="ml-1.5 border-b border-dotted border-[#666] leading-[9px] text-[#666]">Metrics</span>
          <span className="absolute left-[52px]"><Arrow /></span>
          <Icon name="tracking" className="absolute left-[80px] size-[11px]" />
        </div>
      </div>
      <div className="relative mt-[3px] border-t border-[#303030] py-[3px] pl-1">
        <Amount icon="lines" value="0" unit="px" />
        <button className="absolute top-1 left-[62px] h-[13px] w-[50px] border border-[#2a2a2a] bg-[#4a4a4a] pl-1 text-left leading-[10px]">Fill Over</button>
      </div>
      <div className="relative border-t border-[#303030] pt-0.5 pl-1">
        <Amount icon="vscale" value="100" unit="%" right={<Icon name="hscale" className="size-[11px]" />} />
        <Amount icon="baseline" value="0" unit="px" right={<Icon name="tsume" className="size-[11px]" />} />
      </div>
      <div className="mt-1 flex items-center gap-1 border-t border-[#303030] pt-1 pl-[18px] font-serif text-[9px] leading-3 font-bold">
        <button className="w-[14px]">T</button>
        <button className="w-[14px] italic">T</button>
        <button className="h-[13px] w-[17px] border border-black bg-[#2a2a2a] leading-[10px]">TT</button>
        <button className="w-[14px]">Tr</button>
      </div>
    </section>

    <section className="mt-px min-h-0 flex-1 overflow-hidden">
      <PanelTab title="Effects & Presets" />
      <label className="mt-1 ml-1 flex h-3 items-center gap-1 border border-[#222] bg-[#9c9c9c] pl-0.5 text-[#666]">
        <Icon name="search" className="size-[9px]" />
        <Arrow className="size-[5px]" />
        <input aria-label="Search effects" className="min-w-0 flex-1 outline-none" />
      </label>
      <ul className="mt-[3px] h-[188px] overflow-hidden border-t border-[#222]">
        {categories.map((c) => (
          <li key={c} className="flex h-3 items-center gap-[3px] border-b border-[#3a3a3a] pl-[3px]">
            <Arrow dir="right" className="size-[6px] text-[#999]" />
            {c}
          </li>
        ))}
      </ul>
    </section>
  </aside>
);

export default function App() {
  return (
    <div className="relative flex h-screen w-full flex-col overflow-hidden bg-[#161616] font-['Noto_Sans',sans-serif] text-[8px] leading-[10px] text-[#bcbcbc]">
      <nav className="flex h-3 shrink-0 items-start gap-[11px] bg-white pl-[9px] text-[#333]">
        {["Composition", "Layer", "Effect", "Animation", "View", "Window", "Help"].map((item) => (
          <button key={item}>{item}</button>
        ))}
      </nav>
      <Toolbar />
      <main className="mt-px flex min-h-0 flex-1 gap-[3px]">
        <div className="flex min-w-0 flex-1 flex-col gap-[3px]">
          <div className="flex min-h-0 flex-1 gap-[3px]">
            <ProjectPanel />
            <EffectControls />
            <CompositionPanel />
          </div>
          <TimelinePanel />
        </div>
        <Sidebar />
      </main>
      {/* recorder watermark */}
      <p className="pointer-events-none absolute top-[6px] left-1/2 -translate-x-1/2 font-['DejaVu_Sans'] text-[29px] leading-8 font-bold text-[#cfcfcf] [text-shadow:0_0_3px_#000,0_0_5px_#000]">
        www.Bandicam.com
      </p>
      <svg viewBox="0 0 12 10" className="absolute top-[481px] left-[15px] h-[10px] w-3" aria-hidden="true">
        <path d="M0 3h12v1.500H0zM0 6h12v1.500H0zM6 0l2 2H4zM6 10L4 8h4z" fill="#fff" stroke="#222" strokeWidth=".4" />
      </svg>
    </div>
  );
}
